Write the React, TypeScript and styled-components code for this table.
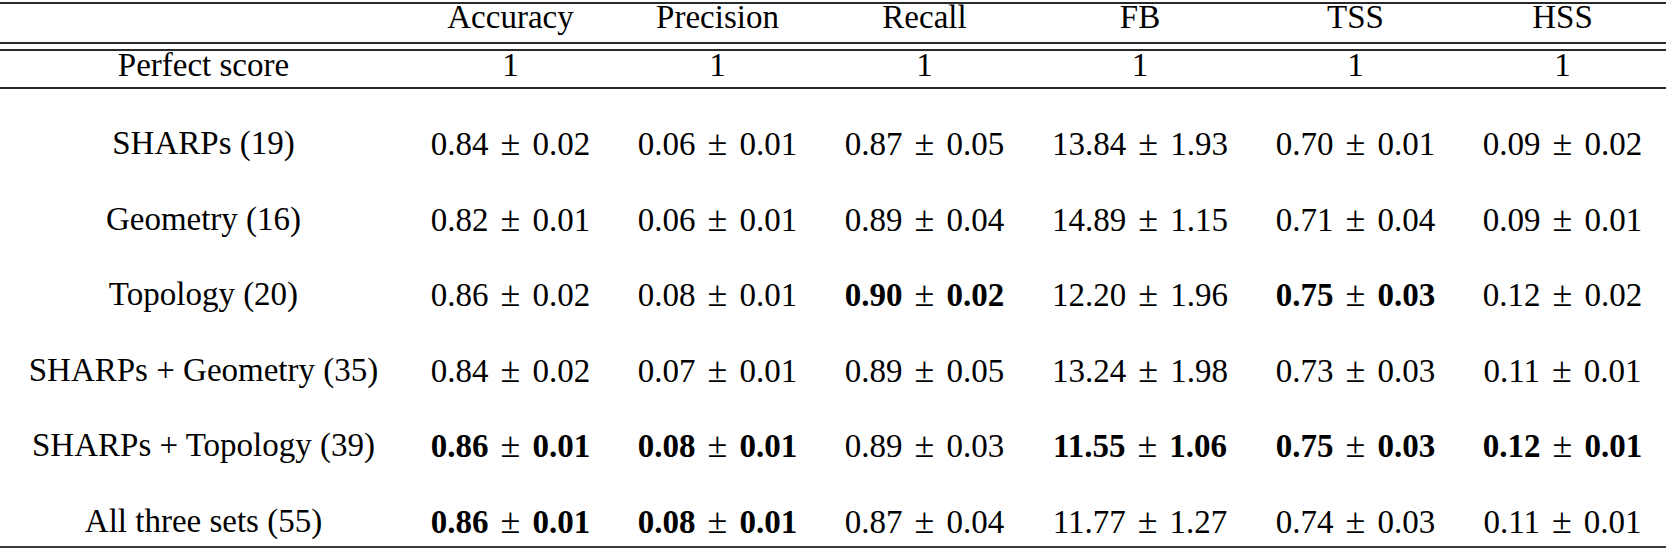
import React from 'react';
import styled, { createGlobalStyle } from 'styled-components';

type Value = {
    v: string,
    e: string,
    bold?: boolean,
}

type Row = {
    label: string,
    values: Value[],
}

const headers = ['Accuracy', 'Precision', 'Recall', 'FB', 'TSS', 'HSS'];

const rows: Row[] = [
    {
        label: 'SHARPs (19)',
        values: [
            { v: '0.84', e: '0.02' }, { v: '0.06', e: '0.01' }, { v: '0.87', e: '0.05' },
            { v: '13.84', e: '1.93' }, { v: '0.70', e: '0.01' }, { v: '0.09', e: '0.02' },
        ],
    },
    {
        label: 'Geometry (16)',
        values: [
            { v: '0.82', e: '0.01' }, { v: '0.06', e: '0.01' }, { v: '0.89', e: '0.04' },
            { v: '14.89', e: '1.15' }, { v: '0.71', e: '0.04' }, { v: '0.09', e: '0.01' },
        ],
    },
    {
        label: 'Topology (20)',
        values: [
            { v: '0.86', e: '0.02' }, { v: '0.08', e: '0.01' }, { v: '0.90', e: '0.02', bold: true },
            { v: '12.20', e: '1.96' }, { v: '0.75', e: '0.03', bold: true }, { v: '0.12', e: '0.02' },
        ],
    },
    {
        label: 'SHARPs + Geometry (35)',
        values: [
            { v: '0.84', e: '0.02' }, { v: '0.07', e: '0.01' }, { v: '0.89', e: '0.05' },
            { v: '13.24', e: '1.98' }, { v: '0.73', e: '0.03' }, { v: '0.11', e: '0.01' },
        ],
    },
    {
        label: 'SHARPs + Topology (39)',
        values: [
            { v: '0.86', e: '0.01', bold: true }, { v: '0.08', e: '0.01', bold: true }, { v: '0.89', e: '0.03' },
            { v: '11.55', e: '1.06', bold: true }, { v: '0.75', e: '0.03', bold: true }, { v: '0.12', e: '0.01', bold: true },
        ],
    },
    {
        label: 'All three sets (55)',
        values: [
            { v: '0.86', e: '0.01', bold: true }, { v: '0.08', e: '0.01', bold: true }, { v: '0.87', e: '0.04' },
            { v: '11.77', e: '1.27' }, { v: '0.74', e: '0.03' }, { v: '0.11', e: '0.01' },
        ],
    },
];

const App: React.FC = () => {
    return (
        <>
            <GlobalStyle />
            <Table>
                <HeadRow>
                    <Cell />
                    {headers.map(h => <Cell key={h}>{h}</Cell>)}
                </HeadRow>
                <PerfectRow>
                    <Cell>Perfect score</Cell>
                    {headers.map(h => <Cell key={h}>1</Cell>)}
                </PerfectRow>
                <Body>
                    {rows.map(r => (
                        <DataRow key={r.label}>
                            <Cell>{r.label}</Cell>
                            {r.values.map((val, i) => (
                                <Cell key={i}>
                                    <Num $bold={val.bold}>{val.v}</Num>
                                    <Pm>±</Pm>
                                    <Num $bold={val.bold}>{val.e}</Num>
                                </Cell>
                            ))}
                        </DataRow>
                    ))}
                </Body>
            </Table>
        </>
    )
}

export default App;

const GlobalStyle = createGlobalStyle`
    body {
        margin: 0;
        background: #ffffff;
        color: #000000;
        font-family: "Liberation Serif", "Times New Roman", serif;
        font-size: 33px;
    }
`

const Table = styled.div`
    width: 1666px;
    margin-top: 2px;
    border-top: 2px solid #2a2a2a;
    border-bottom: 2px solid #3a3a3a;
`

const Grid = styled.div`
    display: grid;
    grid-template-columns: 407px 207px 207px 207px 224px 207px 207px;
`

const HeadRow = styled(Grid)`
    height: 38px;
    border-bottom: 2px solid #2a2a2a;
`

const PerfectRow = styled(Grid)`
    margin-top: 5px;
    height: 35px;
    padding-top: 1px;
    border-top: 2px solid #2a2a2a;
    border-bottom: 2px solid #2a2a2a;
`

const Body = styled.div`
    display: flex;
    flex-direction: column;
    gap: 49.5px;
    padding: 41px 0 12px;
`

const DataRow = styled(Grid)`
    height: 26px;
`

const Cell = styled.div`
    text-align: center;
    line-height: 26px;
    white-space: nowrap;
`

const Num = styled.span<{ $bold?: boolean }>`
    font-weight: ${p => p.$bold ? 700 : 400};
`

const Pm = styled.span`
    font-size: 36px;
    margin: 0 12px;
`
